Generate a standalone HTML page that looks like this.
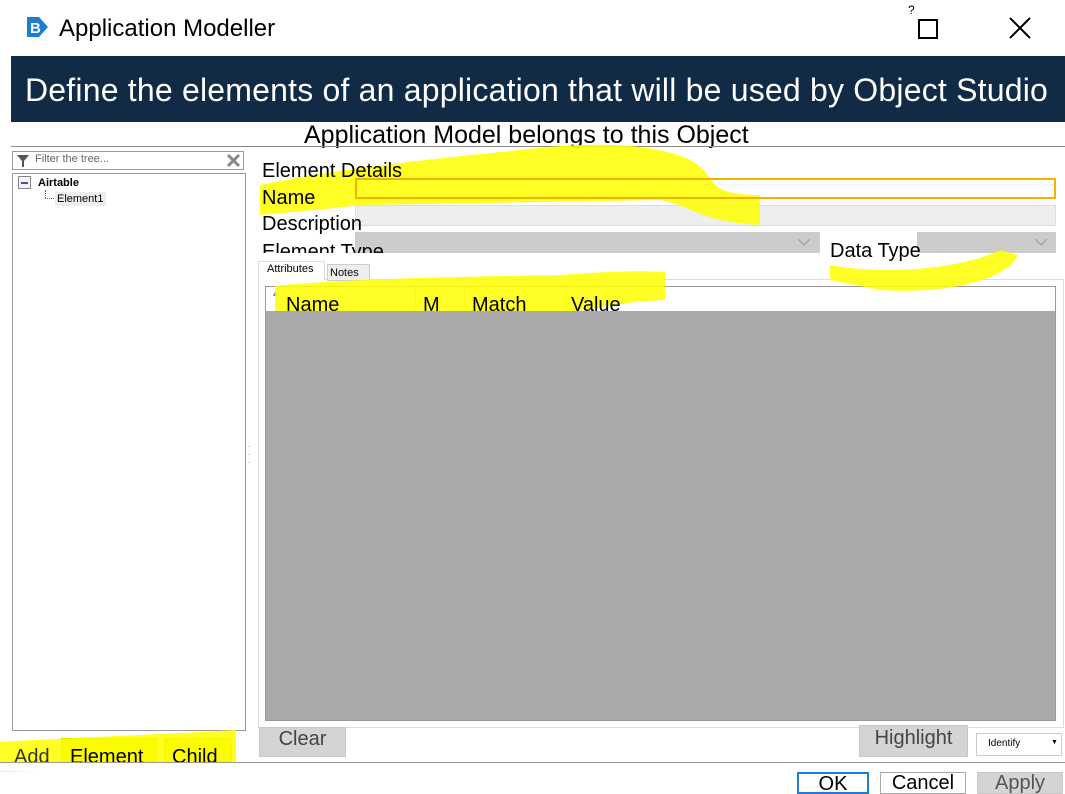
<!DOCTYPE html>
<html><head><style>
body{margin:0;width:1065px;height:794px;background:#fff;font-family:"Liberation Sans",sans-serif;position:relative;overflow:hidden}
.a{position:absolute}
.t{position:absolute;white-space:nowrap;color:#000}
.btn{position:absolute;background:#d4d4d4;border:1px solid #c8c8c8;box-sizing:border-box;text-align:center;color:#444;overflow:hidden}
</style></head><body>
<div class="a" style="left:25px;top:15px;width:24px;height:24px">
<svg width="24" height="24"><polygon points="2,2 14,2 23,12 14,22 2,22" fill="#1a7fd4"/><text x="5" y="18" font-size="15" font-weight="bold" fill="#fff" font-family="Liberation Sans">B</text></svg></div>
<div class="t" style="left:59px;top:15px;font-size:24px">Application Modeller</div>
<div class="t" style="left:908px;top:3px;font-size:12px">?</div>
<div class="a" style="left:918px;top:19px;width:16px;height:16px;border:2px solid #000"></div>
<svg class="a" style="left:1009px;top:17px" width="22" height="22"><path d="M1 1L21 21M21 1L1 21" stroke="#000" stroke-width="2"/></svg>
<div class="a" style="left:11px;top:56px;width:1054px;height:66px;background:#112a45"></div>
<div class="t" style="left:25px;top:72px;font-size:32px;letter-spacing:0.2px;color:#fff">Define the elements of an application that will be used by Object Studio</div>
<div class="t" style="left:304px;top:121px;font-size:25px">Application Model belongs to this Object</div>
<div class="a" style="left:11px;top:146px;width:1054px;height:1px;background:#888"></div>
<div class="a" style="left:12px;top:151px;width:232px;height:19px;border:1px solid #999;box-sizing:border-box"></div>
<svg class="a" style="left:17px;top:155px" width="12" height="12"><polygon points="0,0 12,0 7,6 7,12 5,12 5,6" fill="#555"/></svg>
<div class="t" style="left:35px;top:153px;font-size:11px;color:#666">Filter the tree...</div>
<svg class="a" style="left:226px;top:153px" width="15" height="15"><path d="M2 2L13 13M13 2L2 13" stroke="#888" stroke-width="3"/></svg>
<div class="a" style="left:12px;top:173px;width:234px;height:558px;border:1px solid #999;box-sizing:border-box"></div>
<div class="a" style="left:18px;top:176px;width:13px;height:13px;border:1px solid #888;box-sizing:border-box;background:#f4f4f4"><div class="a" style="left:2px;top:5px;width:7px;height:2px;background:#3a5aa0"></div></div>
<div class="t" style="left:38px;top:177px;font-size:11px;font-weight:bold">Airtable</div>
<div class="a" style="left:45px;top:190px;width:1px;height:8px;border-left:1px dotted #666"></div>
<div class="a" style="left:45px;top:198px;width:9px;border-top:1px dotted #666"></div>
<div class="a" style="left:55px;top:192px;width:51px;height:14px;background:#eee"></div>
<div class="t" style="left:57px;top:193px;font-size:11px">Element1</div>
<div class="t" style="left:248px;top:442px;font-size:9px;color:#999;line-height:8px">·<br>·<br>·</div>
<div class="a" style="left:355px;top:205px;width:701px;height:21px;background:#eee;border:1px solid #ddd;box-sizing:border-box"></div>
<div class="a" style="left:355px;top:232px;width:465px;height:21px;background:#ccc"></div>
<div class="a" style="left:917px;top:232px;width:139px;height:21px;background:#ccc"></div>
<svg class="a" style="left:797px;top:238px" width="14" height="9"><path d="M1 1L7 7L13 1" stroke="#999" fill="none"/></svg>
<svg class="a" style="left:1034px;top:238px" width="14" height="9"><path d="M1 1L7 7L13 1" stroke="#999" fill="none"/></svg>
<div class="t" style="left:262px;top:241px;font-size:20px;height:12px;overflow:hidden;line-height:22px">Element Type</div>
<div class="a" style="left:258px;top:279px;width:806px;height:449px;border:1px solid #ddd;box-sizing:border-box"></div>
<div class="a" style="left:258px;top:261px;width:67px;height:19px;background:#fff;border:1px solid #ddd;border-bottom:none;box-sizing:border-box"></div>
<div class="t" style="left:267px;top:263px;font-size:11px">Attributes</div>
<div class="a" style="left:327px;top:264px;width:43px;height:17px;background:#eee;border:1px solid #ccc;box-sizing:border-box"></div>
<div class="t" style="left:330px;top:267px;font-size:11px">Notes</div>
<div class="a" style="left:265px;top:286px;width:791px;height:435px;border:1px solid #999;box-sizing:border-box;background:#a9a9a9"></div>
<div class="a" style="left:266px;top:287px;width:789px;height:24px;background:#fff"></div>
<div class="t" style="left:271px;top:288px;font-size:9px;color:#888">▲</div>
<div class="a" style="left:415px;top:287px;width:1px;height:24px;background:#ccc"></div>
<div class="a" style="left:464px;top:287px;width:1px;height:24px;background:#ccc"></div>
<div class="a" style="left:566px;top:287px;width:1px;height:24px;background:#ccc"></div>
<div class="btn" style="left:259px;top:727px;width:87px;height:30px;font-size:20px;line-height:22px">Clear</div>
<div class="btn" style="left:859px;top:725px;width:109px;height:32px;font-size:20px;line-height:24px">Highlight</div>
<div class="a" style="left:976px;top:733px;width:86px;height:23px;border:1px solid #ccc;box-sizing:border-box"></div>
<div class="t" style="left:988px;top:738px;font-size:10px">Identify</div>
<div class="t" style="left:1051px;top:739px;font-size:7px">▼</div>
<div class="btn" style="left:61px;top:738px;width:96px;height:25px;background:#eaea00;border-color:#c8c800"></div>
<div class="btn" style="left:164px;top:738px;width:68px;height:25px;background:#eaea00;border-color:#c8c800"></div>
<div class="btn" style="left:797px;top:772px;width:72px;height:22px;background:#fff;border:2px solid #1a7fd4;font-size:20px;line-height:20px;color:#000">OK</div>
<div class="btn" style="left:880px;top:772px;width:86px;height:22px;background:#fff;border:1px solid #aaa;font-size:20px;line-height:20px;color:#000">Cancel</div>
<div class="btn" style="left:977px;top:772px;width:86px;height:22px;font-size:20px;line-height:20px;color:#555">Apply</div>
<svg class="a" style="left:0;top:0" width="1065" height="794">
<g fill="#ffff00" fill-opacity="0.85">
<path d="M260 185 C330 170 420 160 520 150 C600 140 660 145 690 160 C720 175 700 195 760 195 L760 225 C700 222 690 205 660 200 L360 205 C320 210 290 212 260 215 Z"/>
<path d="M830 265 C880 275 960 270 1000 250 L1018 255 C1010 275 960 295 880 290 L830 280 Z"/>
<path d="M275 286 C350 278 500 276 560 275 C600 272 640 270 665 272 L665 300 C600 302 560 320 500 318 C450 320 400 315 275 314 Z"/>
<path d="M0 742 C60 738 150 735 236 730 L236 762 C160 765 80 770 0 772 Z"/>
</g></svg>
<div class="t" style="left:262px;top:160px;font-size:20px">Element Details</div>
<div class="t" style="left:262px;top:187px;font-size:20px">Name</div>
<div class="t" style="left:262px;top:213px;font-size:20px">Description</div>
<div class="t" style="left:830px;top:240px;font-size:20px">Data Type</div>
<div class="t" style="left:286px;top:294px;font-size:20px">Name</div>
<div class="t" style="left:423px;top:294px;font-size:20px">M</div>
<div class="t" style="left:472px;top:294px;font-size:20px">Match</div>
<div class="t" style="left:571px;top:294px;font-size:20px">Value</div>
<div class="a" style="left:266px;top:311px;width:789px;height:409px;background:#a9a9a9"></div>
<div class="a" style="left:355px;top:178px;width:701px;height:21px;border:2px solid #f0b400;box-sizing:border-box"></div>
<div class="t" style="left:70px;top:746px;font-size:20px">Element</div>
<div class="t" style="left:172px;top:746px;font-size:20px">Child</div>
<div class="t" style="left:14px;top:746px;font-size:20px;color:#333">Add</div>
<div class="a" style="left:0;top:762px;width:1065px;height:1px;background:#999"></div>
<div class="a" style="left:0;top:763px;width:260px;height:8px;background:#fff"></div>
</body></html>
